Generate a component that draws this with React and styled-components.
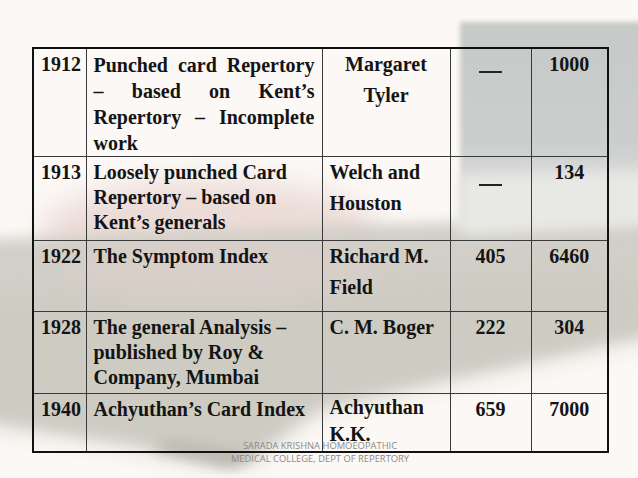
import React from 'react'
import styled, { createGlobalStyle } from 'styled-components'

const GlobalStyle = createGlobalStyle`
  html, body {
    margin: 0;
    padding: 0;
    background: #fbf8f5;
  }
`

const Slide = styled.div`
  position: relative;
  width: 638px;
  height: 478px;
  overflow: hidden;
  background: #fbf8f5;
  font-family: "Liberation Serif", "Times New Roman", serif;
  color: #141414;
`

const Backdrop = styled.svg`
  position: absolute;
  left: 0;
  top: 0;
  width: 638px;
  height: 478px;
`

const Content = styled.div`
  position: relative;
  padding: 47px 0 0 32px;
`

const Table = styled.table`
  border-collapse: collapse;
  table-layout: fixed;
  width: 575px;
  border: 2px solid #111;
`

const Row = styled.tr`
  height: ${p => p.$h}px;
`

const Cell = styled.td`
  border: 1.5px solid #3a3a3a;
  vertical-align: top;
  padding: ${p => p.$pt ?? 3}px 7px 0 7px;
  font-size: 20px;
  font-weight: bold;
  line-height: ${p => p.$lh || 25}px;
  text-align: ${p => p.$align || 'left'};
  white-space: nowrap;
`

const Line = styled.span`
  display: block;
  text-align: ${p => (p.$just ? 'justify' : 'inherit')};
  text-align-last: ${p => (p.$just ? 'justify' : 'auto')};
  white-space: normal;
`

const Dash = styled.span`
  display: inline-block;
  width: 23px;
  height: 1.5px;
  background: #222;
  margin-top: ${p => p.$top}px;
`

const Footer = styled.div`
  position: absolute;
  left: 0;
  right: 0;
  top: 439px;
  text-align: center;
  font-family: "Open Sans", "Liberation Sans", sans-serif;
  font-size: 9.4px;
  line-height: 13px;
  color: #8a8a8a;
  padding-left: 2px;
`

const rows = [
  {
    h: 107,
    year: '1912',
    title: ['Punched card Repertory', '– based on Kent’s', 'Repertory – Incomplete', 'work'],
    just: true,
    titleLh: 26,
    author: ['Margaret', 'Tyler'],
    authorAlign: 'center',
    authorLh: 31,
    pages: <Dash $top={19} />,
    rubrics: '1000',
  },
  {
    h: 84,
    year: '1913',
    title: ['Loosely punched Card', 'Repertory – based on', 'Kent’s generals'],
    author: ['Welch and', 'Houston'],
    authorLh: 31,
    pages: <Dash $top={24} />,
    rubrics: '134',
  },
  {
    h: 71,
    year: '1922',
    title: ['The Symptom Index'],
    author: ['Richard M.', 'Field'],
    authorLh: 31,
    pages: '405',
    rubrics: '6460',
  },
  {
    h: 82,
    year: '1928',
    title: ['The general Analysis –', 'published by Roy &', 'Company, Mumbai'],
    author: ['C. M. Boger'],
    pages: '222',
    rubrics: '304',
  },
  {
    h: 58,
    year: '1940',
    title: ['Achyuthan’s Card Index'],
    author: ['Achyuthan', 'K.K.'],
    authorLh: 27,
    pages: '659',
    rubrics: '7000',
  },
]

// blurred photo of a laptop behind the slide
const Background = () => (
  <Backdrop viewBox="0 0 638 478">
    <defs>
      <filter id="edge" x="-20%" y="-20%" width="140%" height="140%">
        <feGaussianBlur stdDeviation="2.5" />
      </filter>
      <filter id="soft" x="-20%" y="-20%" width="140%" height="140%">
        <feGaussianBlur stdDeviation="7" />
      </filter>
      <filter id="softer" x="-20%" y="-20%" width="140%" height="140%">
        <feGaussianBlur stdDeviation="14" />
      </filter>
      <linearGradient id="screen" x1="0" y1="0" x2="0" y2="1">
        <stop offset="0" stopColor="#c6c9c8" />
        <stop offset="0.6" stopColor="#cbcecd" />
        <stop offset="1" stopColor="#e4e5e2" />
      </linearGradient>
    </defs>
    <rect width="638" height="478" fill="#fbf8f5" />
    <rect x="460" y="22" width="200" height="200" fill="url(#screen)" filter="url(#edge)" />
    <ellipse cx="210" cy="235" rx="170" ry="55" fill="#ecdcd8" filter="url(#softer)" />
    <polygon points="-20,240 660,215 660,330 320,405 240,462 120,440 -20,418" fill="#d1cfc7" filter="url(#soft)" />
    <polygon points="-20,300 300,285 600,270 660,290 660,330 320,405 240,462 120,440 -20,418" fill="#cdcbc2" filter="url(#softer)" />
    <ellipse cx="220" cy="270" rx="150" ry="30" fill="#dccfca" filter="url(#softer)" opacity="0.8" />
    <polygon points="460,175 660,170 660,225 460,235" fill="#e8e8e5" filter="url(#soft)" />
    <polygon points="170,440 260,455 230,468 150,450" fill="#b9b7ad" filter="url(#soft)" />
  </Backdrop>
)

const App = () => (
  <Slide>
    <GlobalStyle />
    <Background />
    <Content>
      <Table>
        <colgroup>
          <col style={{ width: 53 }} />
          <col style={{ width: 236 }} />
          <col style={{ width: 128 }} />
          <col style={{ width: 81 }} />
          <col style={{ width: 77 }} />
        </colgroup>
        <tbody>
          {rows.map(r => (
            <Row key={r.year} $h={r.h}>
              <Cell $align="center">{r.year}</Cell>
              <Cell $lh={r.titleLh}>
                {r.title.map((t, i) => (
                  <Line key={i} $just={r.just && i < r.title.length - 1}>{t}</Line>
                ))}
              </Cell>
              <Cell $align={r.authorAlign} $lh={r.authorLh} $pt={r.authorLh ? 0 : 3}>
                {r.author.map((a, i) => (
                  <Line key={i}>{a}</Line>
                ))}
              </Cell>
              <Cell $align="center">{r.pages}</Cell>
              <Cell $align="center">{r.rubrics}</Cell>
            </Row>
          ))}
        </tbody>
      </Table>
    </Content>
    <Footer>
      SARADA KRISHNA HOMOEOPATHIC
      <br />
      MEDICAL COLLEGE, DEPT OF REPERTORY
    </Footer>
  </Slide>
)

export default App
